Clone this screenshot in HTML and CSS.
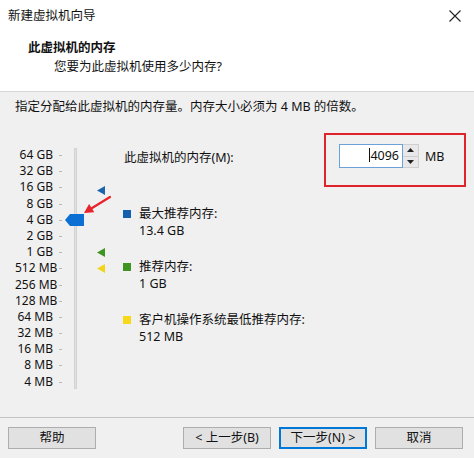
FILE: index.html
```html
<!DOCTYPE html>
<html lang="zh-CN">
<head>
<meta charset="utf-8">
<title>新建虚拟机向导</title>
<link rel="stylesheet" href="styles.css">
</head>
<body>
<div class="dialog">
  <div class="top">
    <div class="titlebar">
      <span class="title">新建虚拟机向导</span>
      <svg class="close" width="12" height="12" viewBox="0 0 12 12"><path d="M0.5 0.5 L11.5 11.5 M11.5 0.5 L0.5 11.5" stroke="#222" stroke-width="1.1" fill="none"/></svg>
    </div>
    <div class="header">
      <div class="h-title">此虚拟机的内存</div>
      <div class="h-sub">您要为此虚拟机使用多少内存?</div>
    </div>
  </div>

  <div class="content">
    <div class="desc">指定分配给此虚拟机的内存量。内存大小必须为 4 MB 的倍数。</div>
    <div class="main">
      <div class="slider">
        <ul class="scale">
          <li>64 GB</li><li>32 GB</li><li>16 GB</li><li>8 GB</li><li>4 GB</li>
          <li>2 GB</li><li>1 GB</li><li>512 MB</li><li>256 MB</li><li>128 MB</li>
          <li>64 MB</li><li>32 MB</li><li>16 MB</li><li>8 MB</li><li>4 MB</li>
        </ul>
        <div class="rail">
          <div class="track"></div>
          <svg class="thumb" width="19" height="12" viewBox="0 0 19 12"><polygon points="0,6 5,0 19,0 19,12 5,12" fill="#0b6fd4"/></svg>
          <svg class="marker m-blue" width="8" height="9" viewBox="0 0 8 9"><polygon points="0,4.5 8,0 8,9" fill="#1c64ad"/></svg>
          <svg class="marker m-green" width="8" height="9" viewBox="0 0 8 9"><polygon points="0,4.5 8,0 8,9" fill="#3f9422"/></svg>
          <svg class="marker m-yellow" width="8" height="9" viewBox="0 0 8 9"><polygon points="0,4.5 8,0 8,9" fill="#f2d51a"/></svg>
          <svg class="arrow" width="52" height="80" viewBox="0 0 52 80">
            <line x1="47" y1="50" x2="28.7" y2="61.3" stroke="#e8232b" stroke-width="2.2" stroke-linecap="round"/>
            <polygon points="21,66 31.3,65.3 26.1,57.1" fill="#e8232b"/>
          </svg>
        </div>
      </div>

      <div class="right">
        <div class="mem-row">
          <span class="mem-label">此虚拟机的内存(M):</span>
          <div class="spin">
            <div class="spin-input"><span class="caret"></span>4096</div>
            <div class="spin-btns">
              <div class="sb"><svg width="7" height="4" viewBox="0 0 7 4"><polygon points="3.5,0 7,4 0,4" fill="#222"/></svg></div>
              <div class="sb"><svg width="7" height="4" viewBox="0 0 7 4"><polygon points="0,0 7,0 3.5,4" fill="#222"/></svg></div>
            </div>
            <span class="unit">MB</span>
          </div>
          <div class="highlight"></div>
        </div>

        <div class="legend">
          <span class="sq sq-blue"></span>
          <div class="lg-text"><div>最大推荐内存:</div><div>13.4 GB</div></div>
        </div>
        <div class="legend">
          <span class="sq sq-green"></span>
          <div class="lg-text"><div>推荐内存:</div><div>1 GB</div></div>
        </div>
        <div class="legend">
          <span class="sq sq-yellow"></span>
          <div class="lg-text"><div>客户机操作系统最低推荐内存:</div><div>512 MB</div></div>
        </div>
      </div>
    </div>
  </div>

  <div class="footer">
    <button class="btn">帮助</button>
    <div class="spacer"></div>
    <button class="btn">&lt; 上一步(B)</button>
    <button class="btn btn-default">下一步(N) &gt;</button>
    <button class="btn">取消</button>
  </div>
</div>
</body>
</html>
```

FILE: styles.css
```css
* { box-sizing: border-box; }
html, body {
  margin: 0;
  padding: 0;
  background: #f0f0f0;
}
body {
  font-family: "Noto Sans", "Noto Sans CJK SC", sans-serif;
  font-size: 12.5px;
  color: #111;
  width: 474px;
  height: 458px;
  overflow: hidden;
}
.dialog {
  width: 474px;
  height: 458px;
  display: flex;
  flex-direction: column;
}
.top {
  background: #fff;
  height: 92px;
  border-bottom: 1px solid #d6d6d6;
}
.titlebar {
  height: 32px;
  display: flex;
  align-items: center;
  justify-content: space-between;
  padding: 0 13px 0 8px;
}
.title { line-height: 16px; }
.close { display: block; }
.header {
  padding-top: 8px;
}
.h-title {
  font-weight: bold;
  padding-left: 28px;
  line-height: 16px;
}
.h-sub {
  padding-left: 54px;
  line-height: 16px;
  margin-top: 3px;
}

.content {
  height: 325px;
  padding: 7px 0 0 15px;
}
.desc { line-height: 16px; }
.main {
  display: flex;
  align-items: flex-start;
  margin-top: 29px;
}
.slider {
  display: flex;
  margin-top: 3px;
}
.scale {
  list-style: none;
  margin: 0;
  padding: 0;
  width: 48px;
  font-size: 12px;
}
.scale li {
  height: 16.2px;
  line-height: 16.2px;
  text-align: right;
  padding-right: 10px;
  position: relative;
  white-space: nowrap;
}
.scale li::after {
  content: "";
  position: absolute;
  right: 1px;
  top: 8px;
  width: 3px;
  height: 1px;
  background: #b8b8b8;
}
.rail {
  position: relative;
  width: 52px;
  height: 243px;
}
.track {
  margin-left: 11px;
  width: 3px;
  height: 241px;
  margin-top: 1px;
  background: #e2e2e2;
  border: 1px solid #d2d2d2;
}
.thumb { position: absolute; left: 2px; top: 67px; }
.marker { position: absolute; left: 34px; }
.m-blue { top: 39px; }
.m-green { top: 101px; }
.m-yellow { top: 117px; }
.arrow { position: absolute; left: 0; top: 0; }

.right {
  margin-left: 7px;
  display: flex;
  flex-direction: column;
}
.mem-row {
  position: relative;
  display: flex;
  align-items: center;
  height: 24px;
}
.mem-label {
  width: 217px;
  padding-left: 2px;
}
.spin {
  display: flex;
  align-items: center;
}
.spin-input {
  width: 64px;
  height: 24px;
  background: #fff;
  border: 1px solid #6ea1d8;
  text-align: right;
  padding-right: 3px;
  line-height: 22px;
  font-size: 12.5px;
  position: relative;
}
.caret {
  display: inline-block;
  width: 1px;
  height: 14px;
  background: #111;
  vertical-align: -2px;
}
.spin-btns {
  width: 16px;
  height: 24px;
  display: flex;
  flex-direction: column;
  border: 1px solid #cfcfcf;
  border-left: none;
}
.sb {
  flex: 1;
  display: flex;
  align-items: center;
  justify-content: center;
  background: #e8e8e8;
}
.sb + .sb { border-top: 1px solid #cfcfcf; }
.sb svg { display: block; }
.unit { margin-left: 6px; }
.highlight {
  position: absolute;
  left: 202px;
  top: -11px;
  width: 142px;
  height: 54px;
  border: 2px solid #e0232b;
}

.legend {
  display: flex;
  align-items: flex-start;
  margin-top: 20px;
}
.mem-row + .legend { margin-top: 38px; }
.sq {
  width: 8px;
  height: 8px;
  margin: 4px 8px 0 1px;
  flex: none;
}
.sq-blue { background: #1560ae; }
.sq-green { background: #3f9422; }
.sq-yellow { background: #f7d81a; }
.lg-text { line-height: 16.5px; }

.footer {
  flex: 1;
  border-top: 1px solid #c4c4c4;
  display: flex;
  align-items: flex-start;
  padding: 9px 11px 0 8px;
}
.spacer { flex: 1; }
.btn {
  font-family: inherit;
  font-size: 12.5px;
  color: #111;
  width: 88px;
  height: 22px;
  background: #e1e1e1;
  border: 1px solid #adadad;
  padding: 0;
  line-height: 20px;
}
.btn + .btn { margin-left: 8px; }
.btn-default {
  border: 1px solid #0078d7;
  box-shadow: inset 0 0 0 1px #0078d7;
}
```
